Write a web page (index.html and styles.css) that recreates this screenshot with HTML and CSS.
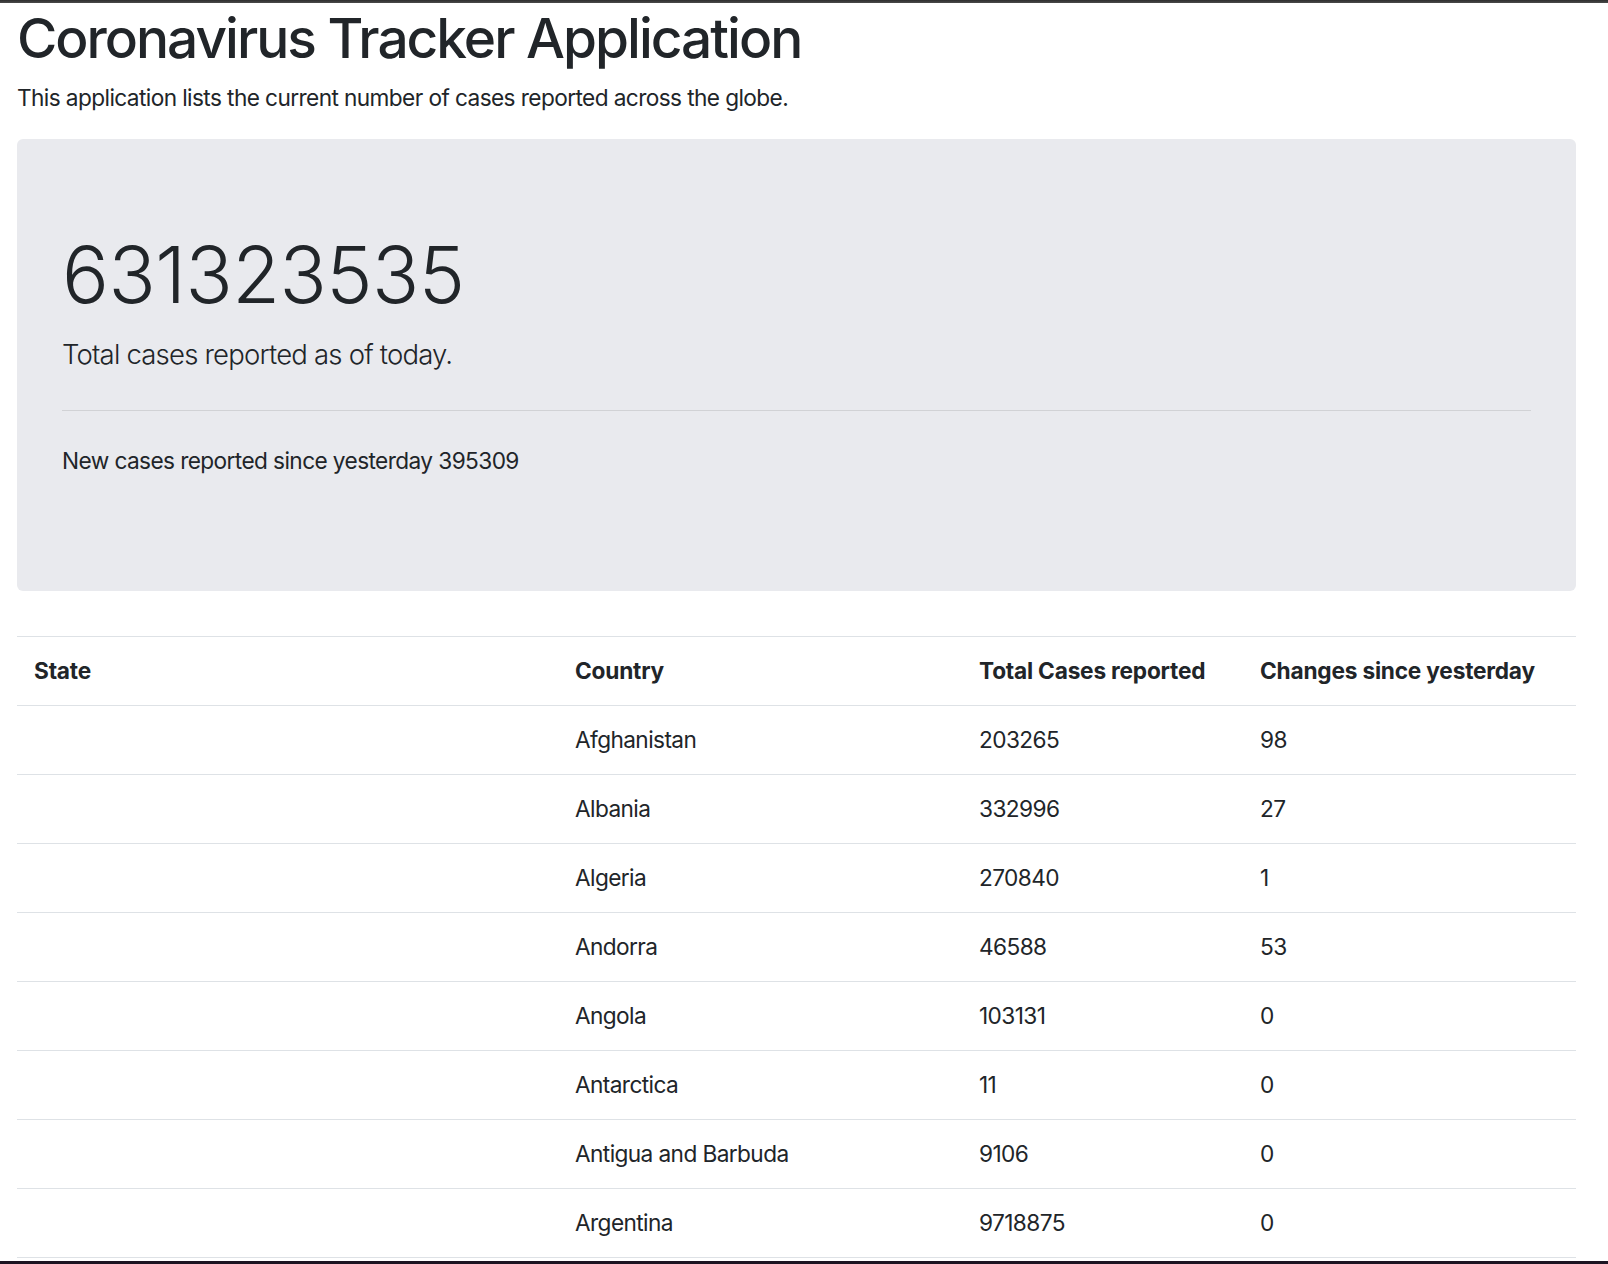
FILE: index.html
```html
<!DOCTYPE html>
<html lang="en">
<head>
<meta charset="utf-8">
<title>Coronavirus Tracker Application</title>
<link rel="stylesheet" href="styles.css">
</head>
<body>
<div class="top-bar"></div>
<main class="page">
  <h1 class="title">Coronavirus Tracker Application</h1>
  <p class="subtitle">This application lists the current number of cases reported across the globe.</p>
  <section class="jumbotron">
    <h2 class="total">631323535</h2>
    <p class="lead">Total cases reported as of today.</p>
    <hr class="divider">
    <p class="new-cases">New cases reported since yesterday 395309</p>
  </section>
  <table class="cases">
    <colgroup>
      <col class="c-state">
      <col class="c-country">
      <col class="c-total">
      <col class="c-change">
    </colgroup>
    <thead>
      <tr><th>State</th><th>Country</th><th>Total Cases reported</th><th>Changes since yesterday</th></tr>
    </thead>
    <tbody>
      <tr><td></td><td>Afghanistan</td><td>203265</td><td>98</td></tr>
      <tr><td></td><td>Albania</td><td>332996</td><td>27</td></tr>
      <tr><td></td><td>Algeria</td><td>270840</td><td>1</td></tr>
      <tr><td></td><td>Andorra</td><td>46588</td><td>53</td></tr>
      <tr><td></td><td>Angola</td><td>103131</td><td>0</td></tr>
      <tr><td></td><td>Antarctica</td><td>11</td><td>0</td></tr>
      <tr><td></td><td>Antigua and Barbuda</td><td>9106</td><td>0</td></tr>
      <tr><td></td><td>Argentina</td><td>9718875</td><td>0</td></tr>
    </tbody>
  </table>
</main>
<div class="bottom-bar"></div>
</body>
</html>
```
FILE: styles.css
```css
html, body {
  margin: 0;
  padding: 0;
  background: #ffffff;
}
body {
  font-family: Inter, "Liberation Sans", sans-serif;
  font-size: 22.67px;
  line-height: 34px;
  letter-spacing: -0.6px;
  color: #212529;
  overflow: hidden;
  height: 1264px;
}
.top-bar {
  height: 3px;
  background: linear-gradient(#2e2e2e, #4a4a4a);
}
.page {
  padding: 2px 32px 0 17px;
}
.title {
  margin: 0 0 10px 0;
  font-size: 55px;
  line-height: 66px;
  font-weight: 500;
  letter-spacing: -2px;
}
.subtitle {
  margin: 0 0 24px 0;
}
.jumbotron {
  background: #e9eaee;
  border-radius: 6px;
  padding: 87px 45px 90.5px 45px;
  margin-bottom: 45px;
}
.total {
  margin: 0 0 10.8px 0;
  font-size: 78px;
  line-height: 97px;
  font-weight: 300;
  letter-spacing: -0.5px;
}
.lead {
  margin: 0;
  font-size: 27.5px;
  line-height: 41px;
  font-weight: 300;
  letter-spacing: -0.8px;
}
.divider {
  margin: 35px 0 33px 0;
  border: 0;
  border-top: 1px solid rgba(0, 0, 0, 0.1);
}
.new-cases {
  margin: 0 0 23px 0;
}
.cases {
  width: 100%;
  border-collapse: collapse;
}
.c-state { width: 541px; }
.c-country { width: 404px; }
.c-total { width: 281px; }
.c-change { width: 333px; }
.cases th,
.cases td {
  text-align: left;
  padding: 17px;
  border-top: 1px solid #dee2e6;
  vertical-align: top;
}
.cases th {
  font-weight: 700;
  letter-spacing: -0.2px;
  border-bottom: 1px solid #dee2e6;
}
.cases tbody tr:last-child td {
  border-bottom: 1px solid #dee2e6;
}
.bottom-bar {
  position: fixed;
  left: 0;
  right: 0;
  bottom: 0;
  height: 3px;
  background: #1c1422;
}
```
